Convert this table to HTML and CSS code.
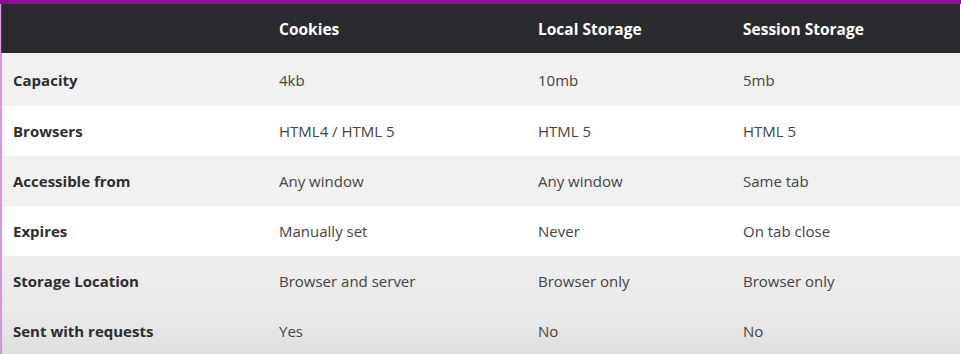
FILE: index.html
```html
<!DOCTYPE html>
<html lang="en">
  <head>
    <title>Cookies vs Local Storage vs Session Storage</title>
    <meta name="viewport" content="width=device-width, initial-scale=1.0" />
    <link rel="stylesheet" href="styles.css">
  </head>

  <body>
    <main class="frame">
      <table class="compare">
        <colgroup>
          <col class="col-label" />
          <col class="col-cookies" />
          <col class="col-local" />
          <col class="col-session" />
        </colgroup>
        <thead>
          <tr>
            <th></th>
            <th>Cookies</th>
            <th>Local Storage</th>
            <th>Session Storage</th>
          </tr>
        </thead>
        <tbody>
          <tr class="first">
            <th>Capacity</th>
            <td>4kb</td>
            <td>10mb</td>
            <td>5mb</td>
          </tr>
          <tr>
            <th>Browsers</th>
            <td>HTML4 / HTML 5</td>
            <td>HTML 5</td>
            <td>HTML 5</td>
          </tr>
          <tr>
            <th>Accessible from</th>
            <td>Any window</td>
            <td>Any window</td>
            <td>Same tab</td>
          </tr>
          <tr>
            <th>Expires</th>
            <td>Manually set</td>
            <td>Never</td>
            <td>On tab close</td>
          </tr>
          <tr class="shade-1">
            <th>Storage Location</th>
            <td>Browser and server</td>
            <td>Browser only</td>
            <td>Browser only</td>
          </tr>
          <tr class="shade-2">
            <th>Sent with requests</th>
            <td>Yes</td>
            <td>No</td>
            <td>No</td>
          </tr>
        </tbody>
      </table>
    </main>
  </body>
</html>
```

FILE: styles.css
```css
*,
*::before,
*::after {
  box-sizing: border-box;
}

* {
  margin: 0;
}

body {
  background-color: #fff;
  color: #3a3a3a;
  font-family: "Open Sans", "Noto Sans", Arial, sans-serif;
  font-size: 15px;
  height: 354px;
  overflow: hidden;
}

.frame {
  border-top: 4px solid #86148a;
  height: 354px;
}

.compare {
  border-collapse: collapse;
  table-layout: fixed;
  width: 959px;
}

.col-label {
  width: 266px;
}

.col-cookies {
  width: 259px;
}

.col-local {
  width: 205px;
}

.col-session {
  width: 229px;
}

th,
td {
  text-align: left;
  padding: 0 12px;
  height: 50px;
  vertical-align: middle;
}

th:first-child {
  border-left: 2px solid rgba(178, 52, 190, 0.5);
  padding-left: 11px;
}

thead tr {
  background-color: #2a2b2f;
  color: #fff;
}

thead th {
  height: 49px;
  font-size: 15.5px;
  font-weight: 700;
}

tbody th {
  font-weight: 700;
  color: #2e2e2e;
}

tbody td {
  color: #444;
}

tbody tr.first th,
tbody tr.first td {
  height: 53px;
}

tbody tr:nth-child(odd) {
  background-color: #f1f1f1;
}

tbody tr:nth-child(even) {
  background-color: #fff;
}

tbody tr.shade-1 {
  background: linear-gradient(#efefef, #e8e8e8);
}

tbody tr.shade-2 {
  background: linear-gradient(#ebebeb, #dedede);
}
```
